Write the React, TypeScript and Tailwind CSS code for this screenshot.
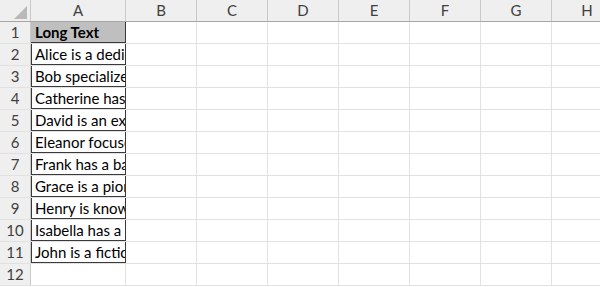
import React from "react";

const cols = ["B", "C", "D", "E", "F", "G", "H"];

const rows = [
  "Alice is a dedicated software engineer with a passion for open source.",
  "Bob specializes in data analysis and statistical modelling.",
  "Catherine has over ten years of experience in project management.",
  "David is an expert in cloud infrastructure and automation.",
  "Eleanor focuses on user research and interaction design.",
  "Frank has a background in finance and risk assessment.",
  "Grace is a pioneer in machine learning research.",
  "Henry is known for his work on distributed systems.",
  "Isabella has a keen eye for detail in quality assurance.",
  "John is a fictional character used for testing purposes.",
];

const font = { fontFamily: "Lato, 'Liberation Sans', sans-serif" };

function RowHead({ n }: { n: number }) {
  return (
    <div className="w-[31px] shrink-0 h-full flex items-center justify-center bg-[#efefef] border-r border-[#c9c9c9] text-[15px] text-[#404040]">
      {n}
    </div>
  );
}

function EmptyCells() {
  return (
    <>
      {cols.map((c) => (
        <div key={c} className="w-[71px] shrink-0 h-full border-r border-[#e1e1e1]" />
      ))}
    </>
  );
}

export default function App() {
  return (
    <div className="w-[600px] h-[287px] overflow-hidden bg-white" style={font}>
      {/* column headers */}
      <div className="flex h-[22px] bg-[#efefef] border-b border-[#a6a6a6]">
        <div className="w-[31px] shrink-0 h-full border-r border-[#c9c9c9] flex items-end justify-end pr-[3px] pb-[2px]">
          <svg width="13" height="13" viewBox="0 0 13 13">
            <polygon points="13,0 13,13 0,13" fill="#b9b9b9" />
          </svg>
        </div>
        <div className="w-[95px] shrink-0 h-full border-r border-[#c9c9c9] flex items-center justify-center text-[15px] text-[#404040]">
          A
        </div>
        {cols.map((c) => (
          <div
            key={c}
            className="w-[71px] shrink-0 h-full border-r border-[#c9c9c9] flex items-center justify-center text-[15px] text-[#404040]"
          >
            {c}
          </div>
        ))}
      </div>

      {/* row 1 */}
      <div className="flex h-[22px] border-b border-[#e1e1e1]">
        <RowHead n={1} />
        <div className="w-[95px] shrink-0 h-full bg-[#bfbfbf] border-b border-r border-[#3a3a3a] pl-[4px] flex items-center font-bold text-[15px] text-black whitespace-nowrap overflow-hidden">
          Long Text
        </div>
        <EmptyCells />
      </div>

      {rows.map((t, i) => (
        <div key={i} className="flex h-[22px] border-b border-[#e1e1e1]">
          <RowHead n={i + 2} />
          <div className="w-[95px] shrink-0 h-full border-l border-b border-r border-[#3a3a3a] pl-[3px] flex items-center text-[15px] text-black whitespace-nowrap overflow-hidden">
            {t}
          </div>
          <EmptyCells />
        </div>
      ))}

      {/* row 12 */}
      <div className="flex h-[22px] border-b border-[#e1e1e1]">
        <RowHead n={12} />
        <div className="w-[95px] shrink-0 h-full border-r border-[#e1e1e1]" />
        <EmptyCells />
      </div>
    </div>
  );
}
